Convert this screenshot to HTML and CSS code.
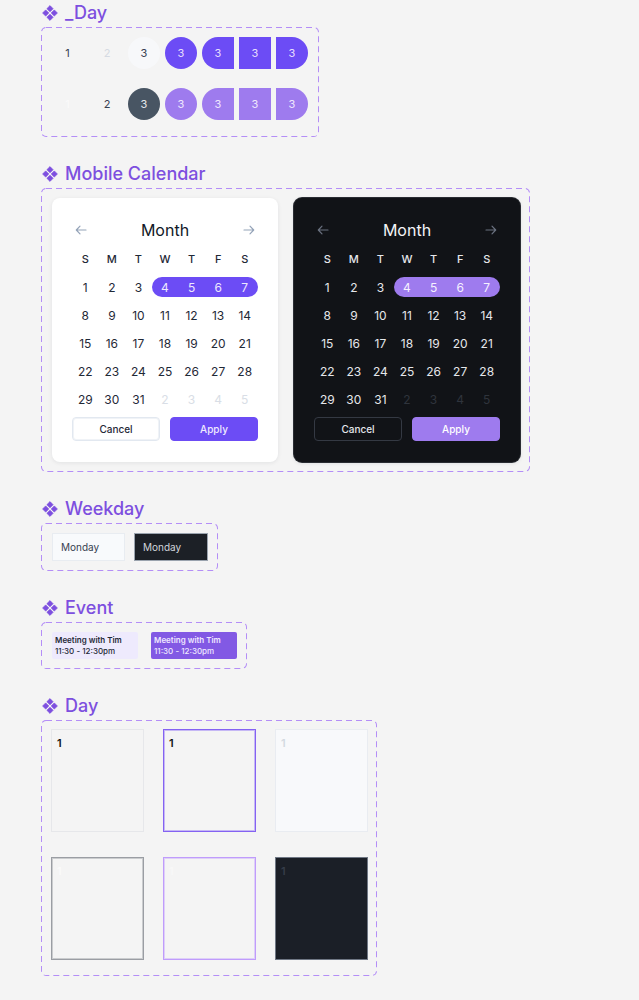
FILE: index.html
```html
<!DOCTYPE html>
<html>
<head>
<meta charset="utf-8">
<title>Calendar components</title>
<link rel="stylesheet" href="styles.css">
</head>
<body>
<main class="page">

  <section class="sec">
    <h2 class="title"><svg class="cicon" viewBox="0 0 16 16"><path d="M8 0.6L11.1 3.7L8 6.8L4.9 3.7Z M3.7 4.9L6.8 8L3.7 11.1L0.6 8Z M12.3 4.9L15.4 8L12.3 11.1L9.2 8Z M8 9.2L11.1 12.3L8 15.4L4.9 12.3Z"/></svg>_Day</h2>
    <div class="box box-day">
      <div class="drow">
        <span class="dc t-dark first">1</span>
        <span class="dc t-dis">2</span>
        <span class="dc s-circle t-today">3</span>
        <span class="dc s-circle p1">3</span>
        <span class="dc s-left p1">3</span>
        <span class="dc s-mid p1">3</span>
        <span class="dc s-right p1">3</span>
      </div>
      <div class="drow">
        <span class="dc t-ghost first">1</span>
        <span class="dc t-dark">2</span>
        <span class="dc s-circle slate">3</span>
        <span class="dc s-circle p2">3</span>
        <span class="dc s-left p2">3</span>
        <span class="dc s-mid p2">3</span>
        <span class="dc s-right p2">3</span>
      </div>
    </div>
  </section>

  <section class="sec">
    <h2 class="title"><svg class="cicon" viewBox="0 0 16 16"><path d="M8 0.6L11.1 3.7L8 6.8L4.9 3.7Z M3.7 4.9L6.8 8L3.7 11.1L0.6 8Z M12.3 4.9L15.4 8L12.3 11.1L9.2 8Z M8 9.2L11.1 12.3L8 15.4L4.9 12.3Z"/></svg>Mobile Calendar</h2>
    <div class="box box-cal">
      <div class="cal light">
        <div class="cal-head">
          <svg class="arr" viewBox="0 0 12 10"><path d="M11 5H1.3M5 1.2L1.3 5L5 8.8"/></svg>
          <span class="month">Month</span>
          <svg class="arr" viewBox="0 0 12 10"><path d="M1 5H10.7M7 1.2L10.7 5L7 8.8"/></svg>
        </div>
        <div class="grid">
          <span class="wd">S</span><span class="wd">M</span><span class="wd">T</span><span class="wd">W</span><span class="wd">T</span><span class="wd">F</span><span class="wd">S</span>
          <span>1</span><span>2</span><span>3</span>
          <div class="range"><span>4</span><span>5</span><span>6</span><span>7</span></div>
          <span>8</span><span>9</span><span>10</span><span>11</span><span>12</span><span>13</span><span>14</span>
          <span>15</span><span>16</span><span>17</span><span>18</span><span>19</span><span>20</span><span>21</span>
          <span>22</span><span>23</span><span>24</span><span>25</span><span>26</span><span>27</span><span>28</span>
          <span>29</span><span>30</span><span>31</span><span class="mute">2</span><span class="mute">3</span><span class="mute">4</span><span class="mute">5</span>
        </div>
        <div class="btns">
          <button class="btn cancel">Cancel</button>
          <button class="btn apply">Apply</button>
        </div>
      </div>

      <div class="cal dark">
        <div class="cal-head">
          <svg class="arr" viewBox="0 0 12 10"><path d="M11 5H1.3M5 1.2L1.3 5L5 8.8"/></svg>
          <span class="month">Month</span>
          <svg class="arr" viewBox="0 0 12 10"><path d="M1 5H10.7M7 1.2L10.7 5L7 8.8"/></svg>
        </div>
        <div class="grid">
          <span class="wd">S</span><span class="wd">M</span><span class="wd">T</span><span class="wd">W</span><span class="wd">T</span><span class="wd">F</span><span class="wd">S</span>
          <span>1</span><span>2</span><span>3</span>
          <div class="range"><span>4</span><span>5</span><span>6</span><span>7</span></div>
          <span>8</span><span>9</span><span>10</span><span>11</span><span>12</span><span>13</span><span>14</span>
          <span>15</span><span>16</span><span>17</span><span>18</span><span>19</span><span>20</span><span>21</span>
          <span>22</span><span>23</span><span>24</span><span>25</span><span>26</span><span>27</span><span>28</span>
          <span>29</span><span>30</span><span>31</span><span class="mute">2</span><span class="mute">3</span><span class="mute">4</span><span class="mute">5</span>
        </div>
        <div class="btns">
          <button class="btn cancel">Cancel</button>
          <button class="btn apply">Apply</button>
        </div>
      </div>
    </div>
  </section>

  <section class="sec">
    <h2 class="title"><svg class="cicon" viewBox="0 0 16 16"><path d="M8 0.6L11.1 3.7L8 6.8L4.9 3.7Z M3.7 4.9L6.8 8L3.7 11.1L0.6 8Z M12.3 4.9L15.4 8L12.3 11.1L9.2 8Z M8 9.2L11.1 12.3L8 15.4L4.9 12.3Z"/></svg>Weekday</h2>
    <div class="box box-wd">
      <div class="wdc wd-light">Monday</div>
      <div class="wdc wd-dark">Monday</div>
    </div>
  </section>

  <section class="sec">
    <h2 class="title"><svg class="cicon" viewBox="0 0 16 16"><path d="M8 0.6L11.1 3.7L8 6.8L4.9 3.7Z M3.7 4.9L6.8 8L3.7 11.1L0.6 8Z M12.3 4.9L15.4 8L12.3 11.1L9.2 8Z M8 9.2L11.1 12.3L8 15.4L4.9 12.3Z"/></svg>Event</h2>
    <div class="box box-ev">
      <div class="ev ev-light"><b>Meeting with Tim</b><span>11:30 - 12:30pm</span></div>
      <div class="ev ev-purple"><b>Meeting with Tim</b><span>11:30 - 12:30pm</span></div>
    </div>
  </section>

  <section class="sec">
    <h2 class="title"><svg class="cicon" viewBox="0 0 16 16"><path d="M8 0.6L11.1 3.7L8 6.8L4.9 3.7Z M3.7 4.9L6.8 8L3.7 11.1L0.6 8Z M12.3 4.9L15.4 8L12.3 11.1L9.2 8Z M8 9.2L11.1 12.3L8 15.4L4.9 12.3Z"/></svg>Day</h2>
    <div class="box box-days">
      <div class="dcell c1">1</div>
      <div class="dcell c2">1</div>
      <div class="dcell c3">1</div>
      <div class="dcell c4">1</div>
      <div class="dcell c5">1</div>
      <div class="dcell c6">1</div>
    </div>
  </section>

</main>
</body>
</html>
```

FILE: styles.css
```css
* { box-sizing: border-box; }

body {
  margin: 0;
  background: #f4f4f4;
  font-family: Inter, "Noto Sans", "Liberation Sans", sans-serif;
  color: #1f2937;
}

.page {
  padding: 2px 0 30px 41px;
  display: flex;
  flex-direction: column;
  align-items: flex-start;
  gap: 26px;
}

.sec {
  display: flex;
  flex-direction: column;
  align-items: flex-start;
  gap: 3px;
}

.title {
  margin: 0;
  height: 22px;
  display: flex;
  align-items: center;
  gap: 7px;
  font-size: 18px;
  line-height: 22px;
  font-weight: 500;
  color: #7d4fdf;
}

.cicon {
  width: 16px;
  height: 16px;
  margin-left: 1px;
  fill: #7d4fdf;
  stroke: #7d4fdf;
  stroke-width: 0.7;
  stroke-linejoin: round;
}

.box {
  border-radius: 5px;
  background-image: url("data:image/svg+xml,%3Csvg xmlns='http://www.w3.org/2000/svg'%3E%3Crect width='100%25' height='100%25' rx='5' fill='none' stroke='%23b48ef7' stroke-width='2' stroke-dasharray='6 4'/%3E%3C/svg%3E");
  background-repeat: no-repeat;
}

/* _Day */
.box-day {
  padding: 10px 11px 17px 13px;
  display: flex;
  flex-direction: column;
  gap: 19px;
}

.drow {
  display: flex;
  gap: 5px;
}

.dc {
  width: 32px;
  height: 32px;
  display: flex;
  align-items: center;
  justify-content: center;
  font-size: 11px;
  color: #374151;
}

.dc.first { padding-right: 5px; }

.t-dark { color: #374151; }
.t-dis { color: #d5dae2; }
.t-ghost { color: #fafafa; }
.t-today { background: #f7f8fa; color: #374151; }

.s-circle { border-radius: 16px; }
.s-left { border-radius: 16px 0 0 16px; }
.s-mid { border-radius: 0; }
.s-right { border-radius: 0 16px 16px 0; }

.p1 { background: #6c4cf5; color: #e6defd; }
.p2 { background: #9e7bee; color: #eee7fd; }
.slate { background: #485563; color: #e5e7eb; }

/* Mobile calendar */
.box-cal {
  padding: 10px 10px 10px 11px;
  display: flex;
  gap: 16px;
}

.cal {
  width: 226px;
  padding: 20px 20px 21px;
  border-radius: 8px;
}

.cal.light {
  background: #ffffff;
  box-shadow: 0 1px 4px rgba(15, 23, 42, 0.08);
}

.cal.dark {
  background: #111317;
  box-shadow: 0 0 0 1px #2a2d33, 0 1px 4px rgba(15, 23, 42, 0.12);
  color: #e5e7eb;
}

.cal-head {
  height: 24px;
  padding: 0 3px;
  margin-bottom: 3px;
  display: flex;
  align-items: center;
  justify-content: space-between;
}

.arr {
  width: 12px;
  height: 10px;
  fill: none;
  stroke: #94a3b8;
  stroke-width: 1.2;
  stroke-linecap: round;
  stroke-linejoin: round;
}

.dark .arr { stroke: #6b7280; }

.month {
  font-size: 16px;
  font-weight: 400;
  color: #111827;
}

.dark .month { color: #f3f4f6; }

.grid {
  display: grid;
  grid-template-columns: repeat(7, 1fr);
  grid-auto-rows: 28px;
  font-size: 12px;
}

.grid > span,
.range > span {
  display: flex;
  align-items: center;
  justify-content: center;
}

.grid .wd {
  font-size: 11px;
  font-weight: 500;
}

.light .grid { color: #1f2937; }
.dark .grid { color: #e5e7eb; }

.grid .mute { color: #d9dee6; }
.dark .grid .mute { color: #2f343c; }

.range {
  grid-column: span 4;
  align-self: center;
  height: 20px;
  border-radius: 10px;
  display: grid;
  grid-template-columns: repeat(4, 1fr);
}

.light .range { background: #6c4cf5; color: #ede8fe; }
.dark .range { background: #9e7bee; color: #f5f1ff; }

.btns {
  margin-top: 4px;
  display: flex;
  gap: 10px;
}

.btn {
  flex: 1;
  height: 24px;
  border-radius: 4px;
  font-family: inherit;
  font-size: 10px;
  font-weight: 500;
  padding: 0;
  cursor: pointer;
}

.light .cancel { background: #ffffff; border: 1px solid #e2e8f0; box-shadow: inset 0 0 0 1px rgba(226, 232, 240, 0.5); color: #1f2937; }
.light .apply { background: #6c4cf5; border: 1px solid #6c4cf5; color: #efeaff; }
.dark .cancel { background: transparent; border: 1px solid #343943; color: #e5e7eb; }
.dark .apply { background: #9e7bee; border: 1px solid #9e7bee; color: #ffffff; }

/* Weekday */
.box-wd {
  padding: 10px 10px 10px 11px;
  display: flex;
  gap: 9px;
}

.wdc {
  width: 73px;
  height: 28px;
  padding-left: 8px;
  display: flex;
  align-items: center;
  font-size: 10px;
}

.wd-light { background: #f8fafc; border: 1px solid #e8ecf1; color: #374151; }
.wd-dark { background: #1c2026; border: 1px solid #9aa3ae; color: #d1d5db; width: 74px; }

/* Event */
.box-ev {
  padding: 10px 10px 10px 11px;
  display: flex;
  gap: 13px;
}

.ev {
  width: 86px;
  height: 27px;
  padding: 2px 3px;
  border-radius: 2px;
  display: flex;
  flex-direction: column;
  justify-content: center;
  font-size: 8px;
  line-height: 11px;
  white-space: nowrap;
}

.ev b { font-weight: 600; }
.ev span { font-weight: 500; }

.ev-light { background: #eeeafd; color: #1f2937; }
.ev-purple { background: #8259e4; color: #efe8ff; }

/* Day */
.box-days {
  padding: 9px 9px 16px 10px;
  display: grid;
  grid-template-columns: repeat(3, 93px);
  grid-auto-rows: 103px;
  column-gap: 19px;
  row-gap: 25px;
}

.dcell {
  padding: 6px 5px;
  font-size: 11px;
  font-weight: 600;
  line-height: 14px;
}

.c1 { background: #f4f4f4; border: 1px solid #e6e7ea; color: #111111; }
.c2 { background: #f4f4f4; border: 1px solid #8462f2; box-shadow: inset 0 0 0 1px rgba(160, 134, 246, 0.55); color: #111111; }
.c3 { background: #f8f9fb; border: 1px solid #e9ecf1; color: #d3d9e1; }
.c4 { background: #f4f4f4; border: 1px solid #9a9da3; box-shadow: inset 0 0 0 1px rgba(160, 163, 168, 0.5); color: #fafafa; }
.c5 { background: #f4f4f4; border: 1px solid #bf9cfb; box-shadow: inset 0 0 0 1px rgba(200, 170, 252, 0.5); color: #f8f8f8; }
.c6 { background: #1b1f27; border: 1px solid #6f7784; color: #363d4a; }
```
